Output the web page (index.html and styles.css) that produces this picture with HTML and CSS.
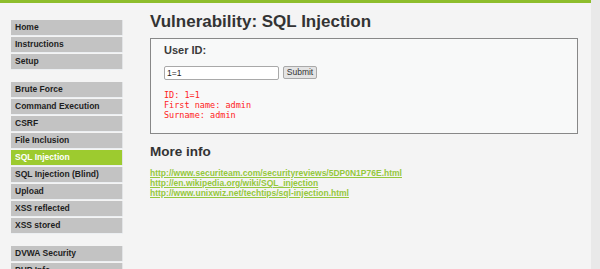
FILE: index.html
```html
<!DOCTYPE html>
<html>
<head>
<meta charset="utf-8">
<title>DVWA - SQL Injection</title>
<link rel="stylesheet" href="styles.css">
</head>
<body>
<div class="page">
  <div class="topbar"></div>
  <div class="layout">
    <nav class="menu">
      <ul class="group">
        <li><a href="#">Home</a></li>
        <li><a href="#">Instructions</a></li>
        <li><a href="#">Setup</a></li>
      </ul>
      <ul class="group">
        <li><a href="#">Brute Force</a></li>
        <li><a href="#">Command Execution</a></li>
        <li><a href="#">CSRF</a></li>
        <li><a href="#">File Inclusion</a></li>
        <li class="selected"><a href="#">SQL Injection</a></li>
        <li><a href="#">SQL Injection (Blind)</a></li>
        <li><a href="#">Upload</a></li>
        <li><a href="#">XSS reflected</a></li>
        <li><a href="#">XSS stored</a></li>
      </ul>
      <ul class="group">
        <li><a href="#">DVWA Security</a></li>
        <li><a href="#">PHP Info</a></li>
      </ul>
    </nav>
    <main class="content">
      <h1 class="title">Vulnerability: SQL Injection</h1>
      <div class="vuln-box">
        <form class="form">
          <p class="label">User ID:</p>
          <div class="row">
            <input class="field" type="text" value="1=1">
            <button class="submit" type="button">Submit</button>
          </div>
        </form>
        <pre class="result">ID: 1=1
First name: admin
Surname: admin</pre>
      </div>
      <h2 class="subtitle">More info</h2>
      <ul class="links">
        <li><a href="#">http://www.securiteam.com/securityreviews/5DP0N1P76E.html</a></li>
        <li><a href="#">http://en.wikipedia.org/wiki/SQL_injection</a></li>
        <li><a href="#">http://www.unixwiz.net/techtips/sql-injection.html</a></li>
      </ul>
    </main>
  </div>
</div>
<div class="strip"></div>
</body>
</html>
```
FILE: styles.css
```css
html, body {
  margin: 0;
  padding: 0;
  height: 100%;
  overflow: hidden;
}
body {
  display: flex;
  background: #f4f4f4;
  font-family: "Liberation Sans", Arial, sans-serif;
  color: #333;
}
.page {
  width: 591px;
  flex: none;
}
.strip {
  flex: 1;
  background: #e9e9e9;
}
.topbar {
  height: 3px;
  background: #8dbd2c;
}
.layout {
  display: flex;
}
.menu {
  width: 112px;
  padding: 17px 0 0 11px;
  flex: none;
}
.group {
  list-style: none;
  margin: 0 0 13px 0;
  padding: 0;
}
.group li {
  margin-bottom: 2px;
}
.group li a {
  display: block;
  height: 15px;
  line-height: 15px;
  padding-left: 4px;
  background: #c3c3c3;
  border-right: 1px solid #e2e4e6;
  box-shadow: 0 1px 0 #eceff2;
  color: #1e1e1e;
  font-weight: bold;
  font-size: 8.5px;
  text-decoration: none;
  white-space: nowrap;
}
.group li.selected a {
  background: #9dcb2f;
  color: #fff;
}
.content {
  margin-left: 27px;
  flex: 1;
}
.title {
  margin: 9px 0 6px 0;
  font-size: 17px;
  line-height: 20px;
  font-weight: bold;
  color: #333;
}
.vuln-box {
  width: 413px;
  border: 1px solid #888;
  background: #f8f9f9;
  padding: 5px 0 13px 13px;
}
.form {
  margin: 0;
}
.label {
  margin: 0;
  font-size: 11px;
  line-height: 13px;
  font-weight: bold;
  color: #3a3a3a;
}
.row {
  display: flex;
  gap: 4px;
  margin-top: 9px;
}
.field {
  box-sizing: border-box;
  width: 115px;
  height: 14px;
  margin: 0;
  padding: 0 2px;
  border: 1px solid #a9a9a9;
  border-radius: 2px;
  background: #fff;
  font-family: "Liberation Sans", Arial, sans-serif;
  font-size: 8.5px;
  color: #222;
}
.submit {
  box-sizing: border-box;
  width: 34px;
  height: 13px;
  margin: 0;
  padding: 0;
  border: 1px solid #a9a9a9;
  border-radius: 2px;
  background: #e4e4e4;
  font-family: "Liberation Sans", Arial, sans-serif;
  font-size: 8.5px;
  line-height: 11px;
  color: #333;
}
.result {
  margin: 10px 0 0 0;
  font-family: "DejaVu Sans Mono", "Liberation Mono", monospace;
  font-size: 8.5px;
  line-height: 10px;
  color: #f22;
}
.subtitle {
  margin: 10px 0 8px 0;
  font-size: 13.5px;
  line-height: 16px;
  font-weight: bold;
  color: #333;
}
.links {
  list-style: none;
  margin: 0;
  padding: 0;
}
.links li {
  font-size: 8.5px;
  line-height: 10px;
  font-weight: bold;
}
.links a {
  color: #94c83c;
  text-decoration: underline;
}
```
